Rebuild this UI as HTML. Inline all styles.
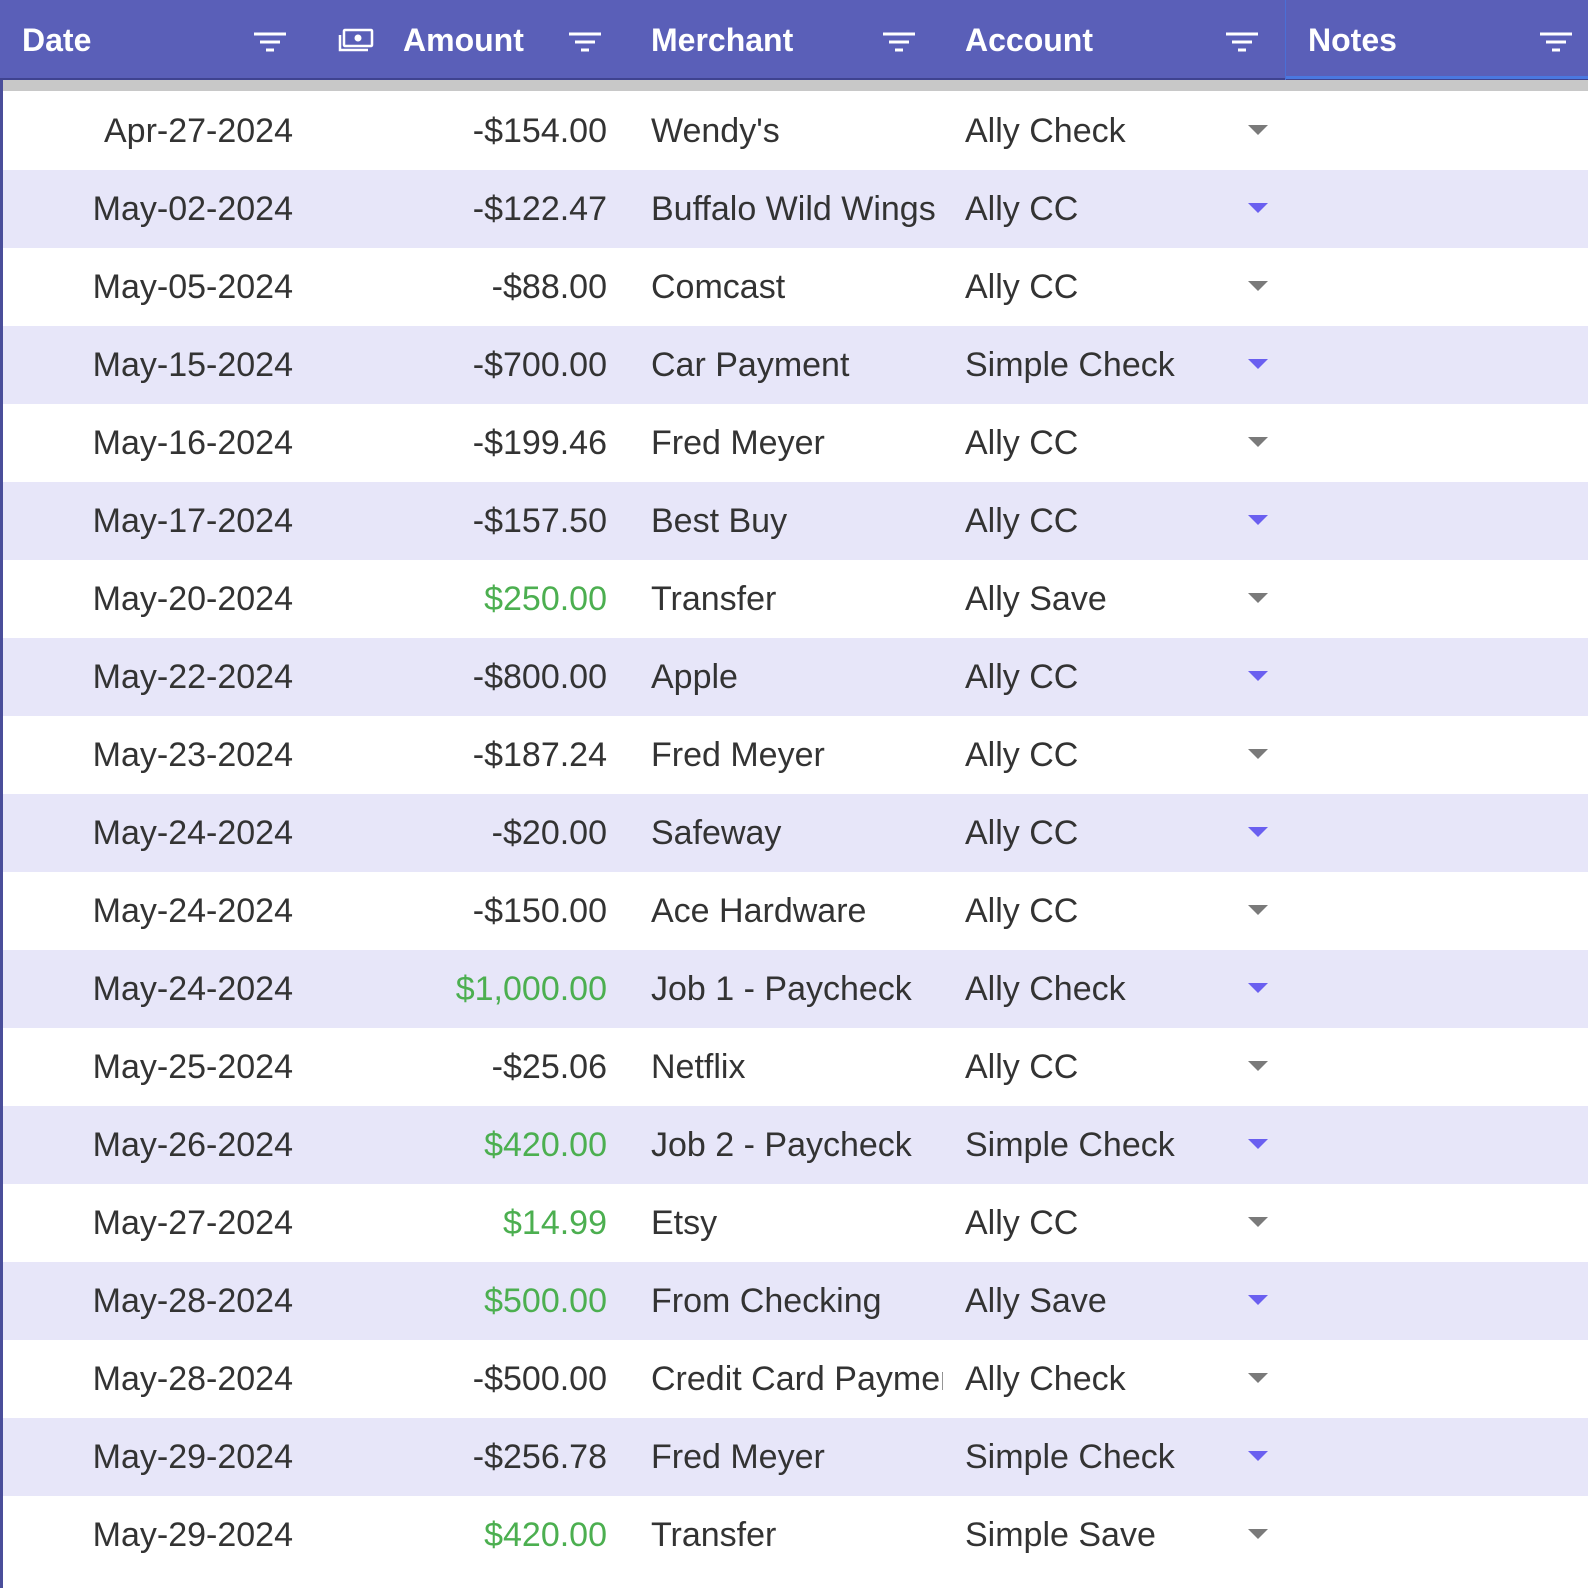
<!DOCTYPE html>
<html><head><style>
html,body{margin:0;padding:0;width:1588px;height:1588px;overflow:hidden;background:#fff;font-family:"Liberation Sans",sans-serif;}
.hdr{position:absolute;left:0;top:0;width:1588px;height:80px;background:#5a5fb8;border-bottom:2px solid #3f4390;box-sizing:border-box;}
.hdr .t{position:absolute;top:22px;color:#fff;font-weight:bold;font-size:32px;line-height:36px;}
.notesline{position:absolute;left:1286px;top:76px;width:302px;height:3px;background:#4a78e0;}
.sep{position:absolute;left:1285px;top:0;width:1px;height:80px;background:#4a6fd6;}
.gray{position:absolute;left:0;top:80px;width:1588px;height:11px;background:#c8c8c8;}
.lb{position:absolute;left:0;top:80px;width:3px;height:1508px;background:#4a4e9a;}
.row{position:absolute;left:0;width:1588px;height:78px;font-size:34px;color:#333;}
.row.a{background:#e7e6f9;}
.row span{position:absolute;top:19px;line-height:40px;white-space:nowrap;}
.d{right:1295px;}
.m{right:981px;}
.mer{left:651px;width:292px;overflow:hidden;}
.ac{left:965px;}
.g{color:#4caf50;}
.tri{position:absolute;left:1248px;top:33px;width:0;height:0;border-left:10px solid transparent;border-right:10px solid transparent;border-top:10px solid #7a7a7a;}
.a .tri{border-top-color:#6a5ff0;}
</style></head><body>
<div class="hdr">
 <div class="t" style="left:22px">Date</div>
 <div class="t" style="left:403px">Amount</div>
 <div class="t" style="left:651px">Merchant</div>
 <div class="t" style="left:965px">Account</div>
 <div class="t" style="left:1308px">Notes</div>
 <svg style="position:absolute;left:252px;top:30px" width="36" height="24"><g stroke="#fff" stroke-width="3"><line x1="2" y1="4" x2="34" y2="4"/><line x1="8" y1="12" x2="28" y2="12"/><line x1="14" y1="20" x2="22" y2="20"/></g></svg>
 <svg style="position:absolute;left:567px;top:30px" width="36" height="24"><g stroke="#fff" stroke-width="3"><line x1="2" y1="4" x2="34" y2="4"/><line x1="8" y1="12" x2="28" y2="12"/><line x1="14" y1="20" x2="22" y2="20"/></g></svg>
 <svg style="position:absolute;left:881px;top:30px" width="36" height="24"><g stroke="#fff" stroke-width="3"><line x1="2" y1="4" x2="34" y2="4"/><line x1="8" y1="12" x2="28" y2="12"/><line x1="14" y1="20" x2="22" y2="20"/></g></svg>
 <svg style="position:absolute;left:1224px;top:30px" width="36" height="24"><g stroke="#fff" stroke-width="3"><line x1="2" y1="4" x2="34" y2="4"/><line x1="8" y1="12" x2="28" y2="12"/><line x1="14" y1="20" x2="22" y2="20"/></g></svg>
 <svg style="position:absolute;left:1538px;top:30px" width="50" height="24"><g stroke="#fff" stroke-width="3"><line x1="2" y1="4" x2="34" y2="4"/><line x1="8" y1="12" x2="28" y2="12"/><line x1="14" y1="20" x2="22" y2="20"/></g></svg>
 <svg style="position:absolute;left:338px;top:28px" width="38" height="26"><g fill="none" stroke="#fff" stroke-width="2.5"><rect x="6" y="2" width="28" height="16" rx="1"/><path d="M2 7 V22 H30"/></g><circle cx="20" cy="10" r="3.5" fill="#fff"/></svg>
 <div class="sep"></div>
 <div class="notesline"></div>
</div>
<div class="gray"></div>
<div class="row" style="top:92px"><span class="d">Apr-27-2024</span><span class="m">-$154.00</span><span class="mer">Wendy's</span><span class="ac">Ally Check</span><i class="tri"></i></div>
<div class="row a" style="top:170px"><span class="d">May-02-2024</span><span class="m">-$122.47</span><span class="mer">Buffalo Wild Wings</span><span class="ac">Ally CC</span><i class="tri"></i></div>
<div class="row" style="top:248px"><span class="d">May-05-2024</span><span class="m">-$88.00</span><span class="mer">Comcast</span><span class="ac">Ally CC</span><i class="tri"></i></div>
<div class="row a" style="top:326px"><span class="d">May-15-2024</span><span class="m">-$700.00</span><span class="mer">Car Payment</span><span class="ac">Simple Check</span><i class="tri"></i></div>
<div class="row" style="top:404px"><span class="d">May-16-2024</span><span class="m">-$199.46</span><span class="mer">Fred Meyer</span><span class="ac">Ally CC</span><i class="tri"></i></div>
<div class="row a" style="top:482px"><span class="d">May-17-2024</span><span class="m">-$157.50</span><span class="mer">Best Buy</span><span class="ac">Ally CC</span><i class="tri"></i></div>
<div class="row" style="top:560px"><span class="d">May-20-2024</span><span class="m g">$250.00</span><span class="mer">Transfer</span><span class="ac">Ally Save</span><i class="tri"></i></div>
<div class="row a" style="top:638px"><span class="d">May-22-2024</span><span class="m">-$800.00</span><span class="mer">Apple</span><span class="ac">Ally CC</span><i class="tri"></i></div>
<div class="row" style="top:716px"><span class="d">May-23-2024</span><span class="m">-$187.24</span><span class="mer">Fred Meyer</span><span class="ac">Ally CC</span><i class="tri"></i></div>
<div class="row a" style="top:794px"><span class="d">May-24-2024</span><span class="m">-$20.00</span><span class="mer">Safeway</span><span class="ac">Ally CC</span><i class="tri"></i></div>
<div class="row" style="top:872px"><span class="d">May-24-2024</span><span class="m">-$150.00</span><span class="mer">Ace Hardware</span><span class="ac">Ally CC</span><i class="tri"></i></div>
<div class="row a" style="top:950px"><span class="d">May-24-2024</span><span class="m g">$1,000.00</span><span class="mer">Job 1 - Paycheck</span><span class="ac">Ally Check</span><i class="tri"></i></div>
<div class="row" style="top:1028px"><span class="d">May-25-2024</span><span class="m">-$25.06</span><span class="mer">Netflix</span><span class="ac">Ally CC</span><i class="tri"></i></div>
<div class="row a" style="top:1106px"><span class="d">May-26-2024</span><span class="m g">$420.00</span><span class="mer">Job 2 - Paycheck</span><span class="ac">Simple Check</span><i class="tri"></i></div>
<div class="row" style="top:1184px"><span class="d">May-27-2024</span><span class="m g">$14.99</span><span class="mer">Etsy</span><span class="ac">Ally CC</span><i class="tri"></i></div>
<div class="row a" style="top:1262px"><span class="d">May-28-2024</span><span class="m g">$500.00</span><span class="mer">From Checking</span><span class="ac">Ally Save</span><i class="tri"></i></div>
<div class="row" style="top:1340px"><span class="d">May-28-2024</span><span class="m">-$500.00</span><span class="mer">Credit Card Payment</span><span class="ac">Ally Check</span><i class="tri"></i></div>
<div class="row a" style="top:1418px"><span class="d">May-29-2024</span><span class="m">-$256.78</span><span class="mer">Fred Meyer</span><span class="ac">Simple Check</span><i class="tri"></i></div>
<div class="row" style="top:1496px"><span class="d">May-29-2024</span><span class="m g">$420.00</span><span class="mer">Transfer</span><span class="ac">Simple Save</span><i class="tri"></i></div>
<div class="lb"></div>
</body></html>
